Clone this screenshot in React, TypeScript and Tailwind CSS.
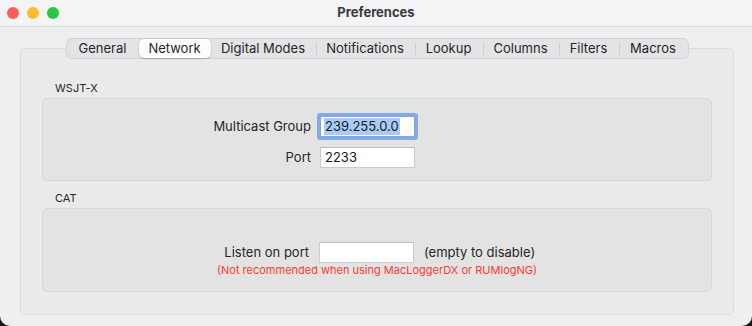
import React from "react";

const tabs = [
  { label: "General", w: "w-[72px]" },
  { label: "Network", w: "w-[72px]" },
  { label: "Digital Modes", w: "w-[105px]" },
  { label: "Notifications", w: "w-[99px]" },
  { label: "Lookup", w: "w-[68px]" },
  { label: "Columns", w: "w-[76px]" },
  { label: "Filters", w: "w-[60px]" },
  { label: "Macros", w: "w-[69px]" },
];

const selected = 1;

function TabBar() {
  return (
    <div className="relative z-10 mx-auto -mb-[11px] flex h-[21px] w-fit items-center rounded-[6px] border border-[#d3d3d5] bg-[#e4e4e6]">
      {tabs.map((t, i) => {
        const active = i === selected;
        // separator sits on the left of a tab unless either neighbour is active
        const showSep = i > 0 && !active && i - 1 !== selected;
        return (
          <div key={t.label} className={`relative flex h-full items-center ${t.w}`}>
            {showSep && (
              <span className="absolute left-0 top-[4px] h-[12px] w-px bg-[#cdcdcf]" />
            )}
            <div
              className={`flex h-full w-full items-center justify-center text-[13px] text-[#262626] ${
                active
                  ? "rounded-[5px] bg-white shadow-[0_0_0_0.5px_rgba(0,0,0,0.12),0_1px_1.5px_rgba(0,0,0,0.18)]"
                  : ""
              }`}
            >
              {t.label}
            </div>
          </div>
        );
      })}
    </div>
  );
}

function TextField({ value, focused }: { value?: string; focused?: boolean }) {
  return (
    <div
      className={`flex h-[21px] w-[95px] items-center bg-white pl-[3px] text-[13px] text-[#1a1a1a] ${
        focused
          ? "rounded-[1px] border border-[#7ea5e6] shadow-[0_0_0_3px_rgba(110,155,230,0.8)]"
          : "border border-[#cbcbcb] border-t-[#bdbdbd]"
      }`}
    >
      {value && (
        <span className={focused ? "bg-[#a9cbf7] px-px leading-[17px]" : "px-px"}>{value}</span>
      )}
    </div>
  );
}

function GroupLabel({ children }: { children: React.ReactNode }) {
  return <div className="mb-[3px] pl-[34px] text-[11px] leading-[14px] text-[#262626]">{children}</div>;
}

export default function App() {
  return (
    <div
      className="h-[326px] w-[752px] bg-[#161616]"
      style={{ fontFamily: "Inter, 'Liberation Sans', sans-serif" }}
    >
      <div className="flex h-full flex-col overflow-hidden rounded-b-[10px] bg-[#efeef0]">
        {/* Title bar */}
        <div className="grid h-[27px] grid-cols-[1fr_auto_1fr] items-center border-b border-[#dad9db] bg-[#f4f3f5]">
          <div className="flex items-center gap-[8px] pl-[7px]">
            <span className="h-[12px] w-[12px] rounded-full bg-[#fe5f57]" />
            <span className="h-[12px] w-[12px] rounded-full bg-[#febc2e]" />
            <span className="h-[12px] w-[12px] rounded-full bg-[#28c840]" />
          </div>
          <div className="pb-[1px] text-[13px] font-bold text-[#3b3b3b]">Preferences</div>
          <div />
        </div>

        {/* Content */}
        <div className="pl-[20px] pr-[18px] pt-[11px]">
          <TabBar />
          <div className="rounded-[5px] border border-[#dcdcde] bg-[#eaeaeb] pb-[22px] pt-[32px]">
            <GroupLabel>WSJT-X</GroupLabel>
            <div className="mx-[21px] rounded-[5px] border border-[#d7d7d8] bg-[#e3e3e4] pb-[12px] pt-[17px]">
              <div className="grid grid-cols-[268px_auto] items-center gap-x-[9px] gap-y-[10px]">
                <div className="text-right text-[13px] text-[#262626]">Multicast Group</div>
                <TextField value="239.255.0.0" focused />
                <div className="text-right text-[13px] text-[#262626]">Port</div>
                <TextField value="2233" />
              </div>
            </div>

            <div className="h-[10px]" />
            <GroupLabel>CAT</GroupLabel>
            <div className="mx-[21px] rounded-[5px] border border-[#d7d7d8] bg-[#e3e3e4] pb-[14px] pt-[33px]">
              <div className="grid grid-cols-[266px_auto_auto] items-center justify-start gap-x-[10px]">
                <div className="text-right text-[13px] text-[#262626]">Listen on port</div>
                <TextField />
                <div className="text-[13px] text-[#262626]">(empty to disable)</div>
              </div>
              <div className="mt-[1px] text-center text-[11px] leading-[13px] text-[#fb3a35]">
                (Not recommended when using MacLoggerDX or RUMlogNG)
              </div>
            </div>
          </div>
        </div>
      </div>
    </div>
  );
}
